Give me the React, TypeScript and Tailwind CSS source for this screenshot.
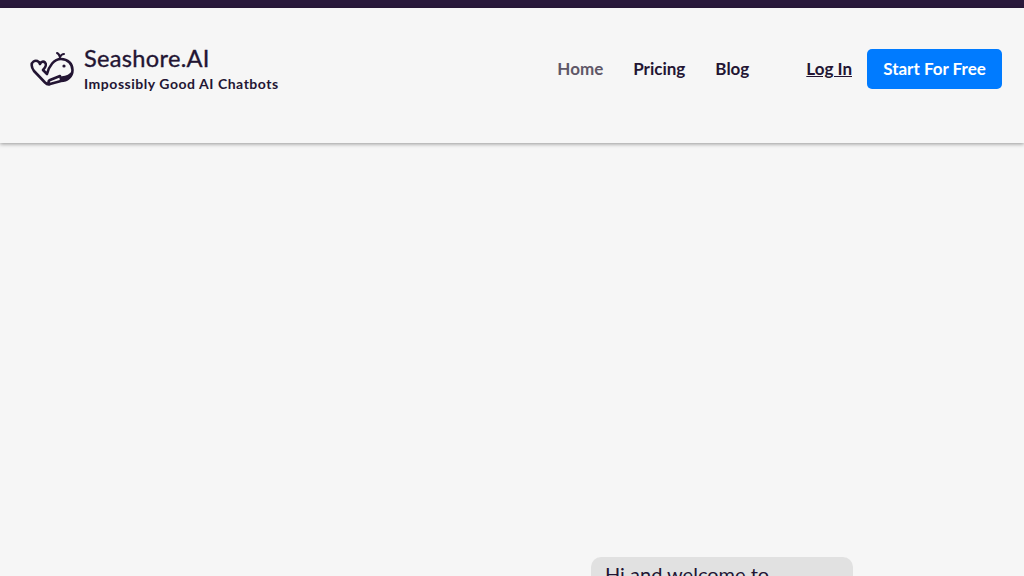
import React from 'react'

const Whale = () => (
  <svg width="44" height="36" viewBox="0 0 44 36" fill="none" className="shrink-0">
    <path
      d="M20 33 C18 34 16.500 33 15 31.500 L4 20 C1 16 1 12 3.500 10.500 C6 9 9 10 10 13 C11 10.500 13.500 10 15 11.500 C16.500 13 16 16 13 19 L17 23 C19 15 24 8 31 8 C38 8 42.500 13 42.500 19 C42.500 26 37 30 31 30 L20 33 C18 32 18 30 20 29 L30 25"
      stroke="#231533"
      strokeWidth="2.6"
      strokeLinecap="round"
      strokeLinejoin="round"
    />
    <path d="M43 19 C43 26 37 31 30 30 L29 25 C35 26 39 24 43 19 Z" fill="#231533" />
    <path d="M30 8 C30 5 29 3 27 2 M30 6 C31 4 32 3 34 3" stroke="#231533" strokeWidth="2" strokeLinecap="round" />
    <circle cx="34" cy="15" r="1.600" fill="#231533" />
  </svg>
)

const links = ['Home', 'Pricing', 'Blog']

export default function App() {
  return (
    <div className="h-[576px] overflow-hidden bg-[#f6f6f6] font-['Lato',sans-serif] text-[#231533]">
      <div className="h-2 bg-[#2a1a3c]" />
      <header className="flex h-[135px] items-center bg-[#f6f6f6] pl-[30px] pr-[22px] pb-[14px] shadow-[0_1px_4px_rgba(0,0,0,0.4)]">
        <Whale />
        <div className="mb-[2px] ml-[10px]">
          <div className="text-[23.6px] leading-[30px] tracking-[0.3px] [-webkit-text-stroke:0.35px_#231533]">
            Seashore.AI
          </div>
          <div className="mt-[2px] text-[14px] leading-[18px] font-bold tracking-[0.53px]">
            Impossibly Good AI Chatbots
          </div>
        </div>
        <nav className="ml-auto flex items-center gap-[30px] text-[17px] font-bold">
          {links.map((link, i) => (
            <a key={link} className={i === 0 ? 'text-[#5f5868]' : ''}>
              {link}
            </a>
          ))}
        </nav>
        <a className="ml-[57px] text-[17px] font-bold underline">Log In</a>
        <button className="ml-[15px] h-10 w-[135px] rounded-[5px] bg-[#007bff] text-[17px] font-bold text-white">
          Start For Free
        </button>
      </header>
      <main className="pt-[414px] pl-[591px]">
        <div className="h-20 w-[262px] rounded-[10px] bg-[#e1e1e1] px-[14px] pt-[3px] text-[20px] leading-7">
          Hi and welcome to
        </div>
      </main>
    </div>
  )
}
